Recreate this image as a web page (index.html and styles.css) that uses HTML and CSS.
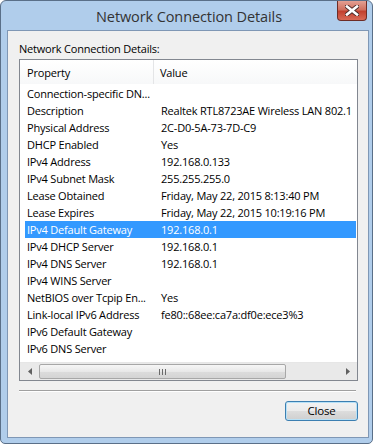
FILE: index.html
```html
<!DOCTYPE html>
<html>
<head>
<meta charset="utf-8">
<link rel="stylesheet" href="styles.css">
</head>
<body>
<div class="window">
  <div class="titlebar">
    <span class="title">Network Connection Details</span>
    <div class="close-x">
      <svg width="14" height="11" viewBox="0 0 14 11">
        <path d="M2 1.5 L12 9.5 M12 1.5 L2 9.5" stroke="#4a2a28" stroke-width="4.4" stroke-linecap="square"/>
        <path d="M2 1.5 L12 9.5 M12 1.5 L2 9.5" stroke="#ffffff" stroke-width="2.6" stroke-linecap="square"/>
      </svg>
    </div>
  </div>
  <div class="client">
    <div class="label">Network Connection Details:</div>
    <div class="listbox">
      <div class="header">
        <div class="hcell hprop">Property</div>
        <div class="hcell hval">Value</div>
      </div>
      <div class="rows">
        <div class="row"><span class="c1">Connection-specific DN...</span><span class="c2"></span></div>
        <div class="row"><span class="c1">Description</span><span class="c2">Realtek RTL8723AE Wireless LAN 802.1</span></div>
        <div class="row"><span class="c1">Physical Address</span><span class="c2">2C-D0-5A-73-7D-C9</span></div>
        <div class="row"><span class="c1">DHCP Enabled</span><span class="c2">Yes</span></div>
        <div class="row"><span class="c1">IPv4 Address</span><span class="c2">192.168.0.133</span></div>
        <div class="row"><span class="c1">IPv4 Subnet Mask</span><span class="c2">255.255.255.0</span></div>
        <div class="row"><span class="c1">Lease Obtained</span><span class="c2">Friday, May 22, 2015 8:13:40 PM</span></div>
        <div class="row"><span class="c1">Lease Expires</span><span class="c2">Friday, May 22, 2015 10:19:16 PM</span></div>
        <div class="row selected"><span class="c1">IPv4 Default Gateway</span><span class="c2">192.168.0.1</span></div>
        <div class="row"><span class="c1">IPv4 DHCP Server</span><span class="c2">192.168.0.1</span></div>
        <div class="row"><span class="c1">IPv4 DNS Server</span><span class="c2">192.168.0.1</span></div>
        <div class="row"><span class="c1">IPv4 WINS Server</span><span class="c2"></span></div>
        <div class="row"><span class="c1">NetBIOS over Tcpip En...</span><span class="c2">Yes</span></div>
        <div class="row"><span class="c1">Link-local IPv6 Address</span><span class="c2">fe80::68ee:ca7a:df0e:ece3%3</span></div>
        <div class="row"><span class="c1">IPv6 Default Gateway</span><span class="c2"></span></div>
        <div class="row"><span class="c1">IPv6 DNS Server</span><span class="c2"></span></div>
      </div>
      <div class="hscroll">
        <div class="arrow-btn">
          <svg width="4" height="7" viewBox="0 0 4 7"><path d="M4 0 L0 3.5 L4 7 Z" fill="#606060"/></svg>
        </div>
        <div class="thumb">
          <span class="grip"></span><span class="grip"></span><span class="grip"></span>
        </div>
        <div class="track"></div>
        <div class="arrow-btn">
          <svg width="4" height="7" viewBox="0 0 4 7"><path d="M0 0 L4 3.5 L0 7 Z" fill="#606060"/></svg>
        </div>
      </div>
    </div>
    <div class="sep"></div>
    <div class="footer">
      <button class="btn">Close</button>
    </div>
  </div>
</div>
</body>
</html>
```

FILE: styles.css
```css
html, body {
  margin: 0;
  padding: 0;
  background: #ffffff;
}

body {
  font-family: "Open Sans", "Noto Sans", "Liberation Sans", sans-serif;
  font-size: 11px;
  letter-spacing: -0.2px;
  color: #000;
}

.window {
  position: relative;
  box-sizing: border-box;
  width: 373px;
  height: 444px;
  border: 1px solid #5a6f88;
  border-radius: 6px 6px 5px 5px;
  background: #b0cdeb;
  padding: 0 3px 5px 6px;
  display: flex;
  flex-direction: column;
}

.titlebar {
  height: 29px;
  display: flex;
  align-items: center;
  justify-content: center;
  padding-left: 2px;
}

.title {
  font-size: 14.5px;
  letter-spacing: -0.1px;
  color: #333333;
  margin-top: 1px;
}

.close-x {
  position: absolute;
  top: 0;
  left: 336px;
  width: 30px;
  height: 20px;
  box-sizing: border-box;
  border: 1px solid #6d2c26;
  border-top: none;
  border-radius: 0 0 4px 4px;
  background: linear-gradient(#e3a093 0%, #d0705f 45%, #c2412f 55%, #d86a56 100%);
  display: flex;
  align-items: center;
  justify-content: center;
}

.client {
  flex: 1;
  border: 1px solid #7f97b5;
  background: #f0f0f0;
  padding: 10px 10px 0 11px;
  display: flex;
  flex-direction: column;
}

.label {
  line-height: 15px;
  height: 15px;
  margin-bottom: 3px;
  color: #000;
}

.listbox {
  box-sizing: border-box;
  width: 339px;
  height: 322px;
  border: 1px solid #828790;
  background: #ffffff;
  display: flex;
  flex-direction: column;
  overflow: hidden;
}

.header {
  height: 24px;
  display: flex;
  background: linear-gradient(#ffffff, #f7f8f9);
  flex-shrink: 0;
}

.hcell {
  display: flex;
  align-items: center;
  box-sizing: border-box;
}

.hprop {
  width: 134px;
  padding-left: 7px;
  border-right: 1px solid #e4e5e7;
}

.hval {
  flex: 1;
  padding-left: 6px;
}

.rows {
  flex: 1;
  padding-top: 1px;
}

.row {
  height: 17px;
  line-height: 17px;
  margin: 0 1px 0 5px;
  padding-left: 2px;
  display: flex;
  white-space: nowrap;
  overflow: hidden;
}

.row.selected {
  background: #3399ff;
  color: #ffffff;
}

.c1 {
  width: 134px;
  flex-shrink: 0;
  overflow: hidden;
}

.c2 {
  flex-shrink: 0;
}

.hscroll {
  height: 18px;
  flex-shrink: 0;
  box-sizing: border-box;
  border-top: 1px solid #e6e6e6;
  background: #e9e9e9;
  display: flex;
  align-items: center;
}

.arrow-btn {
  width: 19px;
  height: 17px;
  display: flex;
  align-items: center;
  justify-content: center;
  flex-shrink: 0;
}

.thumb {
  box-sizing: border-box;
  width: 247px;
  height: 15px;
  border: 1px solid #a7a7a7;
  border-radius: 2px;
  background: linear-gradient(#f6f6f6, #e8e8e8 50%, #dcdcdc 51%, #d4d4d4);
  display: flex;
  align-items: center;
  justify-content: center;
  gap: 2px;
  flex-shrink: 0;
}

.grip {
  width: 1px;
  height: 6px;
  background: #6a6a6a;
}

.track {
  flex: 1;
}

.sep {
  width: 337px;
  height: 1px;
  background: #a0a0a0;
  border-bottom: 1px solid #ffffff;
  margin-top: 9px;
}

.footer {
  display: flex;
  justify-content: flex-end;
  width: 339px;
  margin-top: 9px;
}

.btn {
  box-sizing: border-box;
  width: 73px;
  height: 20px;
  border: 1px solid #3c7fb1;
  border-radius: 3px;
  box-shadow: inset 0 0 0 1px #b7e1f7;
  background: linear-gradient(#f2f2f2, #ebebeb 50%, #dddddd 51%, #cfcfcf);
  font-family: "Open Sans", "Noto Sans", "Liberation Sans", sans-serif;
  font-size: 11.5px;
  letter-spacing: -0.2px;
  color: #000;
  padding: 0;
  line-height: 16px;
}
```
